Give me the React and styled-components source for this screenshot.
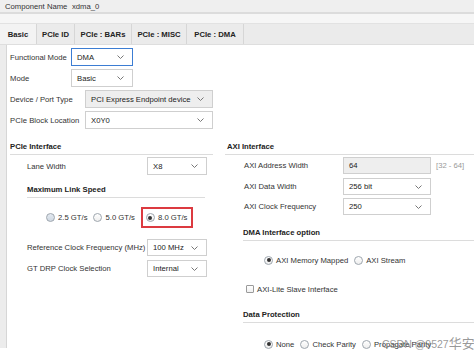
import React from "react";
import styled, { createGlobalStyle } from "styled-components";

const GlobalStyle = createGlobalStyle`
  html, body {
    margin: 0;
    padding: 0;
    background: #fff;
  }
  body {
    font-family: "Liberation Sans", Arial, sans-serif;
    font-size: 7.7px;
    color: #333;
  }
`;

/* frame */
const Page = styled.div`
  position: relative;
  width: 474px;
  height: 353px;
  overflow: hidden;
  display: flex;
  flex-direction: column;
`;

const NameBar = styled.div`
  display: flex;
  align-items: center;
  height: 12px;
  background: #efefef;
  border-bottom: 2px solid #dcdcdc;
  white-space: nowrap;
  & span:first-child {
    box-sizing: border-box;
    width: 72px;
    padding-left: 5px;
  }
`;

const Strip = styled.div`
  height: 9px;
  background: #f6f6f6;
  border-bottom: 1px solid #e2e2e2;
`;

const TabBar = styled.div`
  display: flex;
  height: 20px;
  background: #ebebeb;
  border-bottom: 1px solid #dedede;
`;

const Tab = styled.div`
  width: ${(p) => p.w}px;
  display: flex;
  align-items: center;
  justify-content: center;
  border-right: 1px solid #d6d6d6;
  box-sizing: border-box;
  font-weight: bold;
  color: #222;
  white-space: nowrap;
  background: ${(p) => (p.active ? "#f3f3f3" : "transparent")};
`;

const Body = styled.div`
  flex: 1;
  display: flex;
`;

const Gutter = styled.div`
  width: 6px;
  margin-bottom: 5px;
  background: #ececec;
  border-right: 1px solid #d6d6d6;
`;

const Main = styled.div`
  flex: 1;
  padding: 3px 0 0 3px;
`;

/* form parts */
const Row = styled.div`
  display: flex;
  align-items: center;
  height: ${(p) => p.h || 18}px;
  margin-top: ${(p) => p.mt || 0}px;
  padding-left: ${(p) => p.pl || 0}px;
`;

const Label = styled.span`
  width: ${(p) => p.w}px;
  flex-shrink: 0;
  white-space: nowrap;
`;

const Field = styled.div`
  box-sizing: border-box;
  width: ${(p) => p.w}px;
  height: 100%;
  display: flex;
  align-items: center;
  justify-content: space-between;
  padding: 0 8px 0 5px;
  white-space: nowrap;
  background: ${(p) => (p.disabled ? "#eeeeee" : "#fff")};
  border: 1px solid ${(p) => (p.focus ? "#3c7dd3" : "#cfcfcf")};
  color: #222;
`;

const Hint = styled.span`
  margin-left: 5px;
  color: #9a9a9a;
`;

const Columns = styled.div`
  display: flex;
  margin-top: 11px;
`;

const Column = styled.div`
  width: ${(p) => (p.w ? p.w + "px" : "auto")};
  flex: ${(p) => (p.w ? "none" : 1)};
  margin-left: ${(p) => p.ml || 0}px;
`;

const Title = styled.div`
  height: 14px;
  line-height: 14px;
  font-weight: bold;
  color: #222;
  border-bottom: 1px solid #dcdcdc;
  margin-top: ${(p) => p.mt || 0}px;
  margin-left: ${(p) => p.ml || 0}px;
  margin-right: ${(p) => p.mr || 0}px;
  padding-left: ${(p) => p.pl || 0}px;
`;

const Choice = styled.label`
  display: flex;
  align-items: center;
  gap: 3px;
  margin-right: ${(p) => (p.last ? 0 : 6)}px;
  white-space: nowrap;
`;

const Marked = styled.div`
  display: flex;
  align-items: center;
  height: 100%;
  box-sizing: border-box;
  padding: 0 4px 0 3px;
  border: 2px solid #dc3a40;
`;

const Radio = styled.span`
  position: relative;
  width: 9px;
  height: 9px;
  box-sizing: border-box;
  border-radius: 50%;
  border: 1px solid #9ea6ae;
  background: ${(p) =>
    p.tint ? "linear-gradient(#e4eaf1, #cfd8e2)" : "linear-gradient(#ffffff, #eeeeee)"};
  &::after {
    content: "";
    display: ${(p) => (p.checked ? "block" : "none")};
    position: absolute;
    left: 1.5px;
    top: 1.5px;
    width: 4px;
    height: 4px;
    border-radius: 50%;
    background: #333;
  }
`;

const Check = styled.span`
  width: 8px;
  height: 8px;
  box-sizing: border-box;
  border: 1px solid #9a9a9a;
  border-radius: 1px;
  background: linear-gradient(#fff, #f0f0f0);
`;

const Watermark = styled.div`
  position: absolute;
  left: 382px;
  top: 333px;
  font-family: "Liberation Sans", "Noto Sans CJK SC", sans-serif;
  font-size: 10.5px;
  color: rgba(120, 120, 120, 0.75);
  pointer-events: none;
  white-space: nowrap;
  & b {
    font-weight: normal;
    font-size: 13px;
  }
`;

const Chevron = () => (
  <svg width="7" height="4" viewBox="0 0 7 4">
    <path d="M0.5 0.5 L3.5 3.5 L6.5 0.5" fill="none" stroke="#777" strokeWidth="1" />
  </svg>
);

const Select = ({ w, value, disabled, focus }) => (
  <Field w={w} disabled={disabled} focus={focus}>
    <span>{value}</span>
    <Chevron />
  </Field>
);

const tabs = [
  ["Basic", 37],
  ["PCIe ID", 38],
  ["PCIe : BARs", 57],
  ["PCIe : MISC", 55],
  ["PCIe : DMA", 57],
];

export default function App() {
  return (
    <Page>
      <GlobalStyle />
      <NameBar>
        <span>Component Name</span>
        <span>xdma_0</span>
      </NameBar>
      <Strip />
      <TabBar>
        {tabs.map(([t, w], i) => (
          <Tab key={t} w={w} active={i === 0}>
            {t}
          </Tab>
        ))}
      </TabBar>
      <Body>
        <Gutter />
        <Main>
          <Row>
            <Label w={61}>Functional Mode</Label>
            <Select w={62} value="DMA" focus />
          </Row>
          <Row mt={3}>
            <Label w={61}>Mode</Label>
            <Select w={62} value="Basic" />
          </Row>
          <Row mt={3}>
            <Label w={75}>Device / Port Type</Label>
            <Select w={128} value="PCI Express Endpoint device" disabled />
          </Row>
          <Row mt={3}>
            <Label w={75}>PCIe Block Location</Label>
            <Select w={128} value="X0Y0" />
          </Row>

          <Columns>
            <Column w={203}>
              <Title>PCIe Interface</Title>
              <Row mt={2} pl={17}>
                <Label w={120}>Lane Width</Label>
                <Select w={60} value="X8" />
              </Row>
              <Title mt={8} ml={17} mr={8}>Maximum Link Speed</Title>
              <Row h={21} mt={9} pl={36}>
                <Choice>
                  <Radio tint />
                  2.5 GT/s
                </Choice>
                <Choice>
                  <Radio />
                  5.0 GT/s
                </Choice>
                <Marked>
                  <Choice last>
                    <Radio checked />
                    8.0 GT/s
                  </Choice>
                </Marked>
              </Row>
              <Row h={17} mt={11} pl={17}>
                <Label w={120}>Reference Clock Frequency (MHz)</Label>
                <Select w={60} value="100 MHz" />
              </Row>
              <Row h={17} mt={4} pl={17}>
                <Label w={120}>GT DRP Clock Selection</Label>
                <Select w={60} value="Internal" />
              </Row>
            </Column>

            <Column ml={12}>
              <Title pl={2}>AXI Interface</Title>
              <Row h={17} mt={2} pl={19}>
                <Label w={99}>AXI Address Width</Label>
                <Field w={88} disabled>
                  <span>64</span>
                </Field>
                <Hint>[32 - 64]</Hint>
              </Row>
              <Row h={17} mt={4} pl={19}>
                <Label w={99}>AXI Data Width</Label>
                <Select w={88} value="256 bit" />
              </Row>
              <Row h={17} mt={3} pl={19}>
                <Label w={99}>AXI Clock Frequency</Label>
                <Select w={88} value="250" />
              </Row>
              <Title mt={11} ml={18}>DMA Interface option</Title>
              <Row h={14} mt={12} pl={39}>
                <Choice>
                  <Radio checked />
                  AXI Memory Mapped
                </Choice>
                <Choice>
                  <Radio />
                  AXI Stream
                </Choice>
              </Row>
              <Row h={14} mt={15} pl={21}>
                <Choice>
                  <Check />
                  AXI-Lite Slave Interface
                </Choice>
              </Row>
              <Title mt={12} ml={18}>Data Protection</Title>
              <Row h={14} mt={14} pl={39}>
                <Choice>
                  <Radio checked />
                  None
                </Choice>
                <Choice>
                  <Radio />
                  Check Parity
                </Choice>
                <Choice>
                  <Radio />
                  Propagate Parity
                </Choice>
              </Row>
            </Column>
          </Columns>
        </Main>
      </Body>
      <Watermark>
        CSDN @9527<b>华安</b>
      </Watermark>
    </Page>
  );
}
